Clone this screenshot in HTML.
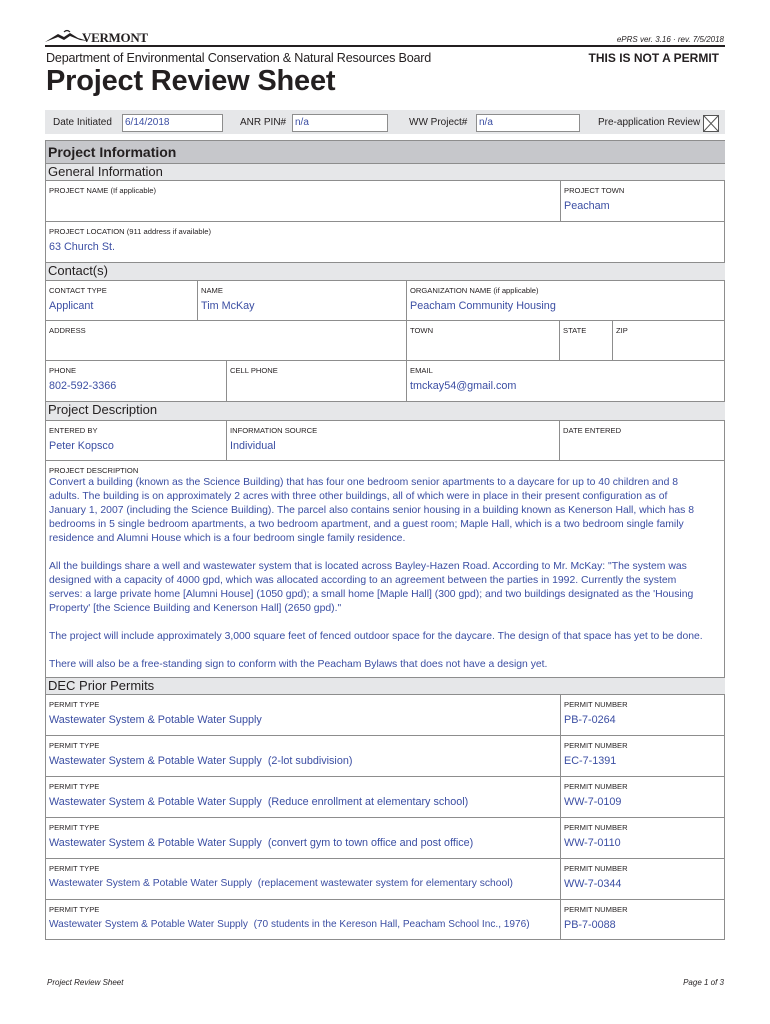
<!DOCTYPE html>
<html><head><meta charset="utf-8"><style>
*{margin:0;padding:0;box-sizing:border-box}
body{width:770px;height:1024px;background:#fff;font-family:"Liberation Sans",sans-serif;color:#231f20;position:relative;overflow:hidden}
.a{position:absolute}
.c{position:absolute;border-left:1px solid #8d8d8d;border-top:1px solid #8d8d8d}
.l{position:absolute;left:3px;top:5px;font-size:7.6px;white-space:nowrap;color:#231f20}
.v{position:absolute;left:3px;top:19px;font-size:10.8px;white-space:nowrap;color:#3b4ea3}
.h{position:absolute;left:45px;width:680px;background:#e6e7e9;border-top:1px solid #8d8d8d;border-left:1px solid #8d8d8d;font-size:13px;padding-left:2px;white-space:nowrap}
.in{position:absolute;top:114px;height:18px;border:1px solid #8d8d8d;background:#fff;font-size:10px;color:#3b4ea3;padding:2px 2px;}
.d{position:absolute;left:49px;font-size:10.4px;color:#3b4ea3;white-space:nowrap;line-height:14px}
</style></head><body>
<svg class="a" style="left:44px;top:28px" width="50" height="16" viewBox="0 0 50 16"><path d="M1 14 L14 6 L20 9 L26 5 L34 10 L44 13 L36 12 L26 8 L20 12 L14 9 Z" fill="#231f20"/><path d="M20 4 q3 -3 6 0" stroke="#231f20" fill="none" stroke-width="1.2"/></svg>
<div class="a" style="left:82px;top:30px;font-family:'Liberation Serif',serif;font-size:13px;font-weight:bold;letter-spacing:-0.3px">VERMONT</div>
<div class="a" style="left:45px;top:45px;width:680px;height:1.5px;background:#231f20"></div>
<div class="a" style="right:46px;top:35px;font-size:8px;font-style:italic">ePRS ver. 3.16 · rev. 7/5/2018</div>
<div class="a" style="left:46px;top:51px;font-size:12.6px;letter-spacing:-0.2px">Department of Environmental Conservation &amp; Natural Resources Board</div>
<div class="a" style="right:51px;top:51px;font-size:12px;font-weight:bold">THIS IS NOT A PERMIT</div>
<div class="a" style="left:46px;top:65px;font-size:29px;font-weight:bold;letter-spacing:-0.2px">Project Review Sheet</div>

<div class="a" style="left:45px;top:110px;width:680px;height:24px;background:#e6e7e9"></div>
<div class="a" style="left:53px;top:117px;font-size:10px">Date Initiated</div>
<div class="in" style="left:122px;width:101px">6/14/2018</div>
<div class="a" style="left:240px;top:117px;font-size:10px">ANR PIN#</div>
<div class="in" style="left:292px;width:96px">n/a</div>
<div class="a" style="left:409px;top:117px;font-size:10px">WW Project#</div>
<div class="in" style="left:476px;width:104px">n/a</div>
<div class="a" style="left:598px;top:117px;font-size:10px">Pre-application Review</div>
<svg class="a" style="left:703px;top:115px" width="16" height="17"><rect x="0.5" y="0.5" width="15" height="16" fill="#fff" stroke="#555"/><path d="M1 1 L15 16 M15 1 L1 16" stroke="#555"/></svg>

<div class="a" style="left:45px;top:140px;width:680px;height:800px;border-right:1px solid #8d8d8d;border-bottom:1px solid #8d8d8d"></div>
<div class="h" style="top:140px;height:23px;background:#c6c7cb;font-weight:bold;font-size:14px;padding-top:3px">Project Information</div>
<div class="h" style="top:163px;height:17px">General Information</div>
<div class="c" style="left:45px;top:180px;width:515px;height:41px"><div class="l">PROJECT NAME (If applicable)</div></div>
<div class="c" style="left:560px;top:180px;width:165px;height:41px"><div class="l">PROJECT TOWN</div><div class="v">Peacham</div></div>
<div class="c" style="left:45px;top:221px;width:680px;height:41px"><div class="l">PROJECT LOCATION (911 address if available)</div><div class="v">63 Church St.</div></div>
<div class="h" style="top:262px;height:18px">Contact(s)</div>
<div class="c" style="left:45px;top:280px;width:152px;height:40px"><div class="l">CONTACT TYPE</div><div class="v">Applicant</div></div>
<div class="c" style="left:197px;top:280px;width:209px;height:40px"><div class="l">NAME</div><div class="v">Tim McKay</div></div>
<div class="c" style="left:406px;top:280px;width:319px;height:40px"><div class="l">ORGANIZATION NAME (if applicable)</div><div class="v">Peacham Community Housing</div></div>
<div class="c" style="left:45px;top:320px;width:361px;height:40px"><div class="l">ADDRESS</div></div>
<div class="c" style="left:406px;top:320px;width:153px;height:40px"><div class="l">TOWN</div></div>
<div class="c" style="left:559px;top:320px;width:53px;height:40px"><div class="l">STATE</div></div>
<div class="c" style="left:612px;top:320px;width:113px;height:40px"><div class="l">ZIP</div></div>
<div class="c" style="left:45px;top:360px;width:181px;height:41px"><div class="l">PHONE</div><div class="v">802-592-3366</div></div>
<div class="c" style="left:226px;top:360px;width:180px;height:41px"><div class="l">CELL PHONE</div></div>
<div class="c" style="left:406px;top:360px;width:319px;height:41px"><div class="l">EMAIL</div><div class="v">tmckay54@gmail.com</div></div>
<div class="h" style="top:401px;height:19px">Project Description</div>
<div class="c" style="left:45px;top:420px;width:181px;height:40px"><div class="l">ENTERED BY</div><div class="v">Peter Kopsco</div></div>
<div class="c" style="left:226px;top:420px;width:333px;height:40px"><div class="l">INFORMATION SOURCE</div><div class="v">Individual</div></div>
<div class="c" style="left:559px;top:420px;width:166px;height:40px"><div class="l">DATE ENTERED</div></div>
<div class="c" style="left:45px;top:460px;width:680px;height:217px"><div class="l">PROJECT DESCRIPTION</div></div>
<div class="d" style="top:476px">Convert a building (known as the Science Building) that has four one bedroom senior apartments to a daycare for up to 40 children and 8<br>adults. The building is on approximately 2 acres with three other buildings, all of which were in place in their present configuration as of<br>January 1, 2007 (including the Science Building). The parcel also contains senior housing in a building known as Kenerson Hall, which has 8<br>bedrooms in 5 single bedroom apartments, a two bedroom apartment, and a guest room; Maple Hall, which is a two bedroom single family<br>residence and Alumni House which is a four bedroom single family residence.</div>
<div class="d" style="top:560px">All the buildings share a well and wastewater system that is located across Bayley-Hazen Road. According to Mr. McKay: "The system was<br>designed with a capacity of 4000 gpd, which was allocated according to an agreement between the parties in 1992. Currently the system<br>serves: a large private home [Alumni House] (1050 gpd); a small home [Maple Hall] (300 gpd); and two buildings designated as the 'Housing<br>Property' [the Science Building and Kenerson Hall] (2650 gpd)."</div>
<div class="d" style="top:630px">The project will include approximately 3,000 square feet of fenced outdoor space for the daycare. The design of that space has yet to be done.</div>
<div class="d" style="top:658px">There will also be a free-standing sign to conform with the Peacham Bylaws that does not have a design yet.</div>
<div class="h" style="top:677px;height:17px">DEC Prior Permits</div>

<div class="c" style="left:45px;top:694px;width:515px;height:41px"><div class="l">PERMIT TYPE</div><div class="v">Wastewater System &amp; Potable Water Supply</div></div>
<div class="c" style="left:560px;top:694px;width:165px;height:41px"><div class="l">PERMIT NUMBER</div><div class="v">PB-7-0264</div></div>
<div class="c" style="left:45px;top:735px;width:515px;height:41px"><div class="l">PERMIT TYPE</div><div class="v">Wastewater System &amp; Potable Water Supply&nbsp; (2-lot subdivision)</div></div>
<div class="c" style="left:560px;top:735px;width:165px;height:41px"><div class="l">PERMIT NUMBER</div><div class="v">EC-7-1391</div></div>
<div class="c" style="left:45px;top:776px;width:515px;height:41px"><div class="l">PERMIT TYPE</div><div class="v">Wastewater System &amp; Potable Water Supply&nbsp; (Reduce enrollment at elementary school)</div></div>
<div class="c" style="left:560px;top:776px;width:165px;height:41px"><div class="l">PERMIT NUMBER</div><div class="v">WW-7-0109</div></div>
<div class="c" style="left:45px;top:817px;width:515px;height:41px"><div class="l">PERMIT TYPE</div><div class="v">Wastewater System &amp; Potable Water Supply&nbsp; (convert gym to town office and post office)</div></div>
<div class="c" style="left:560px;top:817px;width:165px;height:41px"><div class="l">PERMIT NUMBER</div><div class="v">WW-7-0110</div></div>
<div class="c" style="left:45px;top:858px;width:515px;height:41px"><div class="l">PERMIT TYPE</div><div class="v" style="font-size:10.3px">Wastewater System &amp; Potable Water Supply&nbsp; (replacement wastewater system for elementary school)</div></div>
<div class="c" style="left:560px;top:858px;width:165px;height:41px"><div class="l">PERMIT NUMBER</div><div class="v">WW-7-0344</div></div>
<div class="c" style="left:45px;top:899px;width:515px;height:41px"><div class="l">PERMIT TYPE</div><div class="v" style="font-size:10.1px">Wastewater System &amp; Potable Water Supply&nbsp; (70 students in the Kereson Hall, Peacham School Inc., 1976)</div></div>
<div class="c" style="left:560px;top:899px;width:165px;height:41px"><div class="l">PERMIT NUMBER</div><div class="v">PB-7-0088</div></div>

<div class="a" style="left:47px;top:978px;font-size:8px;font-style:italic">Project Review Sheet</div>
<div class="a" style="right:46px;top:978px;font-size:8px;font-style:italic">Page 1 of 3</div>
</body></html>
